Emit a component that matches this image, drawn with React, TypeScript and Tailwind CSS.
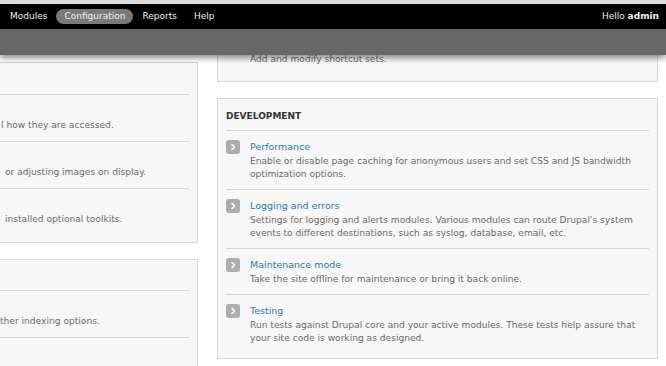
import React from "react";

const font = { fontFamily: '"DejaVu Sans", Verdana, sans-serif' };

const devItems = [
    {
        title: "Performance",
        desc: [
            "Enable or disable page caching for anonymous users and set CSS and JS bandwidth",
            "optimization options.",
        ],
    },
    {
        title: "Logging and errors",
        desc: [
            "Settings for logging and alerts modules. Various modules can route Drupal's system",
            "events to different destinations, such as syslog, database, email, etc.",
        ],
    },
    {
        title: "Maintenance mode",
        desc: ["Take the site offline for maintenance or bring it back online."],
    },
    {
        title: "Testing",
        desc: [
            "Run tests against Drupal core and your active modules. These tests help assure that",
            "your site code is working as designed.",
        ],
    },
];

function ArrowIcon() {
    return (
        <svg width="14" height="14" viewBox="0 0 14 14" className="shrink-0">
            <rect x="0" y="0" width="14" height="14" rx="3" fill="#adadad" />
            <path d="M6 4.5 L8.5 7 L6 9.5" stroke="#fff" strokeWidth="1.6" fill="none" strokeLinecap="round" strokeLinejoin="round" />
        </svg>
    );
}

function DevItem({ title, desc }: { title: string; desc: string[] }) {
    return (
        <div className="flex gap-[10px] border-t border-[#d6d6d6] pt-[8px] pb-[8px]">
            <div className="pt-[1px]">
                <ArrowIcon />
            </div>
            <div>
                <div className="text-[9.5px] leading-[16px] text-[#2b79b6]">{title}</div>
                {desc.map((d) => (
                    <div key={d} className="text-[9.1px] leading-[13px] text-[#6a6a6a]">
                        {d}
                    </div>
                ))}
            </div>
        </div>
    );
}

// left column items are cut off by the window edge, only the tails show
function LeftItem({ text, pad }: { text: string; pad: string }) {
    return (
        <div className="border-t border-[#d6d6d6] pt-[8px] pb-[9px]">
            <div className="h-[16px]" />
            <div className={`text-[9.1px] leading-[13px] text-[#6a6a6a] whitespace-nowrap ${pad}`}>{text}</div>
        </div>
    );
}

export default function App() {
    return (
        <div className="relative h-[366px] overflow-hidden bg-white" style={font}>
            {/* toolbar */}
            <div className="absolute top-0 left-0 right-0 z-10">
                <div className="h-[4px] bg-[#dedede]" />
                <div className="h-[25px] bg-black flex items-center justify-between pl-[2px] pr-[7px] text-[9px] text-[#f0eef8]">
                    <div className="flex items-center gap-[1px]">
                        <span className="px-[8px] leading-[15px]">Modules</span>
                        <span className="px-[8px] leading-[15px] rounded-full bg-[#7a7a7a]">Configuration</span>
                        <span className="px-[8px] leading-[15px]">Reports</span>
                        <span className="px-[8px] leading-[15px]">Help</span>
                    </div>
                    <div>
                        Hello <span className="font-bold">admin</span>
                    </div>
                </div>
                <div className="h-[26px] bg-[#676767] shadow-[0_3px_6px_rgba(0,0,0,0.45)]" />
            </div>

            <div className="flex gap-[19px]">
                {/* left column */}
                <div className="w-[198px] shrink-0 flex flex-col gap-[16px]">
                    <div className="mt-[62px] bg-[#f7f7f7] border border-l-0 border-[#d8d8d8] pr-[8px] pb-[7px]">
                        <div className="h-[31px]" />
                        <LeftItem text="l how they are accessed." pad="pl-[1px]" />
                        <LeftItem text="or adjusting images on display." pad="pl-[5px]" />
                        <LeftItem text="installed optional toolkits." pad="pl-[5px]" />
                    </div>
                    <div className="bg-[#f7f7f7] border border-l-0 border-[#d8d8d8] pr-[8px] pb-[8px]">
                        <div className="h-[30px]" />
                        <LeftItem text="ther indexing options." pad="pl-0" />
                        <LeftItem text="" pad="pl-0" />
                    </div>
                </div>

                {/* right column */}
                <div className="w-[441px] shrink-0 flex flex-col gap-[16px]">
                    <div className="mt-[28px] bg-[#f7f7f7] border border-[#d8d8d8] px-[8px] pt-[8px] pb-[15px]">
                        <div className="pl-[24px]">
                            <div className="text-[9.5px] leading-[16px] text-[#2b79b6]">Shortcuts</div>
                            <div className="text-[9.1px] leading-[13px] text-[#6a6a6a]">Add and modify shortcut sets.</div>
                        </div>
                    </div>
                    <div className="bg-[#f7f7f7] border border-[#d8d8d8] px-[8px] pt-[10px] pb-[5px]">
                        <div className="text-[9px] leading-[14px] font-bold text-[#333] pb-[7px]">DEVELOPMENT</div>
                        {devItems.map((it) => (
                            <DevItem key={it.title} title={it.title} desc={it.desc} />
                        ))}
                    </div>
                </div>
            </div>
        </div>
    );
}
